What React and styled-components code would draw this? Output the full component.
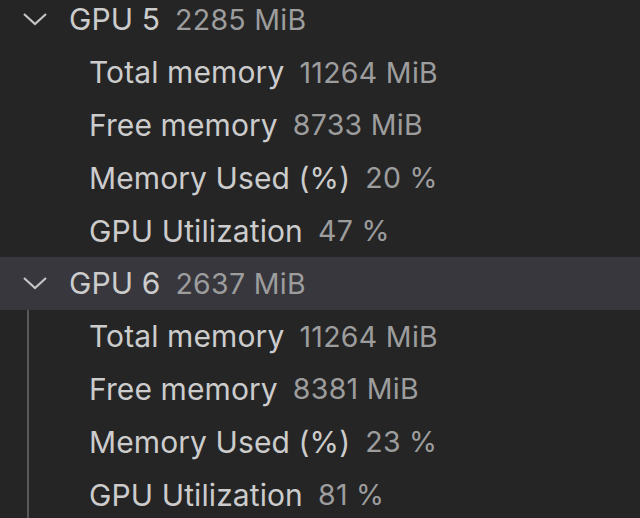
import React from 'react';
import styled, { createGlobalStyle } from 'styled-components';

const gpus = [
  {
    name: 'GPU 5',
    used: '2285 MiB',
    items: [
      ['Total memory', '11264 MiB'],
      ['Free memory', '8733 MiB'],
      ['Memory Used (%)', '20 %'],
      ['GPU Utilization', '47 %'],
    ],
  },
  {
    name: 'GPU 6',
    used: '2637 MiB',
    active: true,
    items: [
      ['Total memory', '11264 MiB'],
      ['Free memory', '8381 MiB'],
      ['Memory Used (%)', '23 %'],
      ['GPU Utilization', '81 %'],
    ],
  },
];

const Global = createGlobalStyle`
  html, body {
    margin: 0;
    background: #252526;
    overflow: hidden;
  }
  body {
    font-family: Inter, "Noto Sans", sans-serif;
    -webkit-font-smoothing: antialiased;
  }
`;

const Tree = styled.div`
  margin-top: -7px;
  width: 640px;
  height: 525px;
  background: #252526;
`;

const Group = styled.div``;

const Row = styled.div`
  height: 52.8px;
  display: flex;
  align-items: center;
  padding-left: ${(p) => p.$indent}px;
  background: ${(p) => (p.$active ? '#37373d' : 'transparent')};
  white-space: nowrap;
`;

const Twistie = styled.svg`
  width: 26px;
  height: 14px;
  margin-right: 21px;
  flex-shrink: 0;
`;

const Children = styled.div`
  position: relative;
  &::before {
    content: '';
    position: absolute;
    left: 27px;
    top: 0;
    bottom: 0;
    width: 1.5px;
    background: ${(p) => (p.$guide ? '#585858' : 'transparent')};
  }
`;

const Label = styled.span`
  color: #cccccc;
  font-size: 30px;
  letter-spacing: 0.1px;
`;

const Desc = styled.span`
  color: #9d9d9d;
  font-size: 28.5px;
  margin-left: 15px;
  letter-spacing: 0.3px;
`;

const Chevron = () => (
  <Twistie viewBox="0 0 26 14">
    <path d="M2 2 L13 12 L24 2" fill="none" stroke="#c5c5c5" strokeWidth="2.2" />
  </Twistie>
);

export default function App() {
  return (
    <>
      <Global />
      <Tree>
        {gpus.map((g) => (
          <Group key={g.name}>
            <Row $indent={22} $active={g.active}>
              <Chevron />
              <Label>{g.name}</Label>
              <Desc>{g.used}</Desc>
            </Row>
            <Children $guide={g.active}>
              {g.items.map(([k, v]) => (
                <Row key={k} $indent={89}>
                  <Label>{k}</Label>
                  <Desc>{v}</Desc>
                </Row>
              ))}
            </Children>
          </Group>
        ))}
      </Tree>
    </>
  );
}
